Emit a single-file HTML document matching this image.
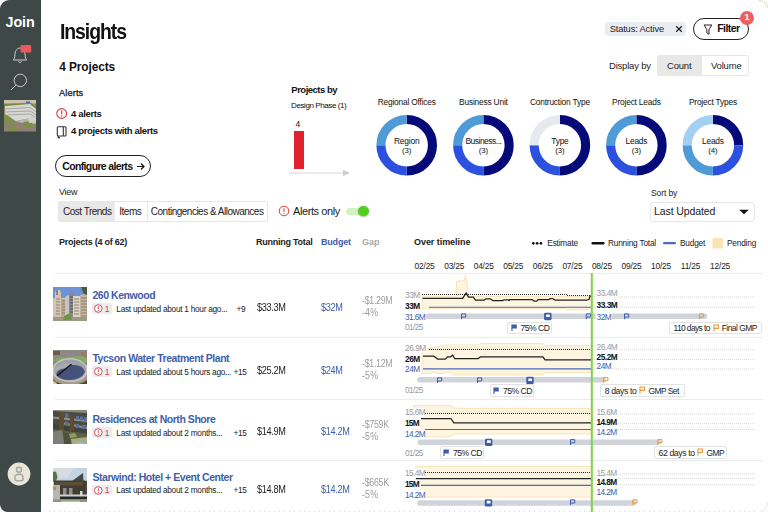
<!DOCTYPE html>
<html lang="en">
<head>
<meta charset="utf-8">
<title>Insights</title>
<style>
*{box-sizing:border-box;margin:0;padding:0}
html,body{width:768px;height:512px;overflow:hidden;background:#fff}
body{font-family:"Liberation Sans",sans-serif;color:#111;position:relative;font-size:10px}
.t{position:absolute;white-space:nowrap;line-height:1}
.b{font-weight:bold}
.abs{position:absolute}
#side{position:absolute;left:0;top:0;width:41px;height:512px;background:#3e4847;border-radius:9px 0 0 7.5px}
.blue{color:#3f5ea9}
.gray{color:#8f8f8f}
.sep{position:absolute;left:55px;width:708px;height:0;border-top:1px solid #eaedf0}
.thumb{position:absolute;left:53px;width:34px;height:34px;overflow:hidden}
.badge{position:absolute;left:92.3px;width:20px;height:10.4px;background:#e9edf2;border-radius:2px}
.tag{position:absolute;height:12.4px;border:1px solid #e2e2e2;border-radius:2px;background:#fff}
</style>
</head>
<body>
<!-- SIDEBAR -->
<div id="side"></div>
<div class="t b" style="left:5.5px;top:14.6px;font-size:14.3px;color:#fff;letter-spacing:-0.05px">Join</div>

<!-- HEADER -->
<div class="t b" style="left:60px;top:20.6px;font-size:21.6px;letter-spacing:-1.2px;transform:scaleX(0.9);transform-origin:0 0">Insights</div>
<div class="t b" style="left:59.2px;top:61.5px;font-size:11.9px;letter-spacing:-0.1px">4 Projects</div>
<div class="t" style="left:59px;top:88.8px;font-size:9.3px;letter-spacing:0.1px;-webkit-text-stroke:0.25px #111">Alerts</div>
<div class="t b" style="left:71px;top:109px;font-size:9.5px;letter-spacing:-0.35px">4 alerts</div>
<div class="t b" style="left:71px;top:126px;font-size:9.5px;letter-spacing:-0.35px">4 projects with alerts</div>
<div class="abs" style="left:55px;top:155.200px;width:96px;height:21.500px;border:1.200px solid #222;border-radius:11px"></div>
<div class="t b" style="left:62.3px;top:161px;font-size:10.5px;letter-spacing:-0.65px">Configure alerts</div>
<div class="t" style="left:59px;top:188px;font-size:9px;letter-spacing:-0.3px;color:#222">View</div>

<!-- sidebar icons -->
<svg class="abs" style="left:0;top:40px" width="41" height="100" viewBox="0 0 41 100">
  <!-- bell -->
  <path d="M13.3 20 C15.3 18.3 14.6 14.2 15.4 11.8 C16.3 9 18.5 8 20 8 C21.5 8 23.7 9 24.6 11.8 C25.4 14.2 24.7 18.3 26.7 20 Z" fill="none" stroke="#c9cccb" stroke-width="1"/>
  <path d="M18.3 21.6 Q20 23.4 21.7 21.6" fill="none" stroke="#c9cccb" stroke-width="1"/>
  <rect x="20.5" y="5" width="10.7" height="7.5" rx="1" fill="#e9595c"/>
  <!-- search -->
  <circle cx="20.3" cy="40.4" r="6.2" fill="none" stroke="#c9cccb" stroke-width="1"/>
  <path d="M16 45 L11 50" stroke="#c9cccb" stroke-width="1"/>
</svg>
<!-- sidebar project thumbnail -->
<svg class="abs" style="left:4px;top:100px" width="32" height="31.5" viewBox="0 0 32 31.5"><defs><filter id="bl0" x="0" y="0" width="100%" height="100%"><feGaussianBlur stdDeviation="0.5"/></filter><clipPath id="c0"><rect width="32" height="31.500"/></clipPath></defs>
<g clip-path="url(#c0)"><g filter="url(#bl0)">
<rect x="-2" y="-2" width="36" height="36" fill="#8f8c78"/>
<rect x="-2" y="-2" width="36" height="5.500" fill="#cbc3ac"/>
<rect x="22" y="1.500" width="4" height="1.500" fill="#3f66c8"/>
<path d="M-1 4 L27 3 L33 8 L33 12 L-1 9Z" fill="#76883f"/>
<path d="M1 6 L26 4 L32 9 L32 17 L12 21 L1 15Z" fill="#d6d6d2"/>
<path d="M1 9 L26 7.500 L32 12 M1 12 L26 11 L32 15 M3 15 L26 14 L31 17" stroke="#a9a8a0" stroke-width="1" fill="none"/>
<path d="M-1 13 L6 17 L12 22 L9 27 L-1 26Z" fill="#7e8f48"/>
<path d="M12 21 L32 17 L33 24 L20 24Z" fill="#b9b6ae"/>
<path d="M-1 25 L12 22 L33 25 L33 34 L-1 34Z" fill="#8e8074"/>
<path d="M4 27 L12 25 L14 32 L5 33Z M19 22 L27 21 L30 27 L22 28Z" fill="#7d8e48"/>
<path d="M24 18 L33 17 L33 22 L25 23Z" fill="#d0d0cc"/>
</g></g></svg>
<!-- avatar -->
<svg class="abs" style="left:5.2px;top:460.200px" width="28" height="28" viewBox="0 0 28 28">
  <circle cx="14" cy="14" r="11.4" fill="#e9e5d8"/>
  <circle cx="14" cy="9.800" r="2.500" fill="none" stroke="#a6a6a0" stroke-width="1.400"/>
  <path d="M10 20 L10 17.200 Q10 14.200 14 14.200 Q18 14.200 18 17.200 L18 20 Q14 21.800 10 20 Z" fill="none" stroke="#a6a6a0" stroke-width="1.400"/>
</svg>

<!-- alert icons -->
<svg class="abs" style="left:55px;top:106px" width="14" height="34" viewBox="0 0 14 34">
  <circle cx="6.700" cy="7.500" r="4.900" fill="#fff" stroke="#e0383e" stroke-width="1.100"/>
  <rect x="6.100" y="4.500" width="1.200" height="3.800" fill="#e0383e"/><rect x="6.100" y="9.200" width="1.200" height="1.300" fill="#e0383e"/>
  <!-- book/projects icon -->
  <path d="M3.300 20.800 H10 Q11 20.800 11 21.800 V29 Q11 30 10 30 H3.300 Q2.300 30 2.300 29 V21.800 Q2.300 20.800 3.300 20.800 Z M8.300 20.800 V30 M3.200 30 V31.600 H5" fill="none" stroke="#333" stroke-width="1.100"/>
</svg>
<!-- arrow in configure alerts button -->
<svg class="abs" style="left:135.5px;top:161.8px" width="11" height="9" viewBox="0 0 11 9"><path d="M1 4.5 H8 M5 1.500 L8 4.5 L5 7.500" fill="none" stroke="#111" stroke-width="1.2"/></svg>

<!-- view tabs -->
<div class="abs" style="left:58px;top:200.5px;width:210px;height:21px;border:1px solid #e6e6e6;border-radius:3px;background:#fff"></div>
<div class="abs" style="left:58px;top:200.5px;width:57px;height:21px;background:#e8e8e8;border-radius:3px 0 0 3px"></div>
<div class="abs" style="left:146.5px;top:200.5px;width:1px;height:21px;background:#e6e6e6"></div>
<div class="t" style="left:63px;top:206.5px;font-size:10px;letter-spacing:-0.5px;color:#222">Cost Trends</div>
<div class="t" style="left:119.3px;top:206.5px;font-size:10px;letter-spacing:-0.5px;color:#222">Items</div>
<div class="t" style="left:150.8px;top:206.5px;font-size:10px;letter-spacing:-0.5px;color:#222">Contingencies &amp; Allowances</div>

<!-- alerts only -->
<svg class="abs" style="left:277px;top:204px" width="14" height="14" viewBox="0 0 14 14">
  <circle cx="7" cy="7" r="4.8" fill="#fff" stroke="#e0383e" stroke-width="1"/>
  <rect x="6.5" y="4.2" width="1" height="3.6" fill="#e0383e"/><rect x="6.5" y="8.8" width="1" height="1.1" fill="#e0383e"/>
</svg>
<div class="t" style="left:293px;top:205.5px;font-size:11px;letter-spacing:-0.4px;color:#222">Alerts only</div>
<div class="abs" style="left:346px;top:207.7px;width:21px;height:7px;border-radius:3.5px;background:#d2f3c0"></div>
<div class="abs" style="left:358.4px;top:206px;width:10.2px;height:10.2px;border-radius:50%;background:#4fd01c;box-shadow:0 1px 1.5px rgba(0,0,0,.3)"></div>

<!-- Projects by bar chart -->
<div class="t b" style="left:291.3px;top:84.7px;font-size:9.5px;letter-spacing:-0.5px">Projects by</div>
<div class="t" style="left:291px;top:101.8px;font-size:8.1px;letter-spacing:-0.45px">Design Phase (1)</div>
<div class="t" style="left:295.5px;top:120px;font-size:8.5px">4</div>
<div class="abs" style="left:293.5px;top:131.2px;width:10.3px;height:38.3px;background:#e0212e"></div>
<svg class="abs" style="left:288px;top:168px" width="64" height="10" viewBox="0 0 64 10"><path d="M1 5 H56" stroke="#d8d8d8" stroke-width="1"/><path d="M55 1.800 L62 5 L55 8.200 Z" fill="#cdd0d3"/></svg>

<!-- donuts -->
<svg class="abs" style="left:0;top:0" width="768" height="240" viewBox="0 0 768 240" font-family="Liberation Sans, sans-serif">
<path d="M406.70 119.55 A25.75 25.75 0 0 1 406.70 171.05" fill="none" stroke="#050a78" stroke-width="9.1"/>
<path d="M406.70 171.05 A25.75 25.75 0 0 1 380.95 145.30" fill="none" stroke="#2c50e0" stroke-width="9.1"/>
<path d="M380.95 145.30 A25.75 25.75 0 0 1 406.70 119.55" fill="none" stroke="#4f9bd8" stroke-width="9.1"/>
<text x="406.7" y="104.6" font-size="8.4" text-anchor="middle" fill="#111" letter-spacing="-0.2">Regional Offices</text>
<text x="406.7" y="144" font-size="8.4" text-anchor="middle" fill="#111" letter-spacing="-0.2">Region</text>
<text x="406.7" y="152.8" font-size="7.8" text-anchor="middle" fill="#111">(3)</text>
<path d="M483.40 119.55 A25.75 25.75 0 0 1 483.40 171.05" fill="none" stroke="#050a78" stroke-width="9.1"/>
<path d="M483.40 171.05 A25.75 25.75 0 0 1 457.65 145.30" fill="none" stroke="#2c50e0" stroke-width="9.1"/>
<path d="M457.65 145.30 A25.75 25.75 0 0 1 483.40 119.55" fill="none" stroke="#4f9bd8" stroke-width="9.1"/>
<text x="483.4" y="104.6" font-size="8.4" text-anchor="middle" fill="#111" letter-spacing="-0.2">Business Unit</text>
<text x="483.4" y="144" font-size="8.4" text-anchor="middle" fill="#111" letter-spacing="-0.45">Business...</text>
<text x="483.4" y="152.8" font-size="7.8" text-anchor="middle" fill="#111">(3)</text>
<path d="M559.90 119.55 A25.75 25.75 0 0 1 559.90 171.05" fill="none" stroke="#050a78" stroke-width="9.1"/>
<path d="M559.90 171.05 A25.75 25.75 0 0 1 534.15 145.30" fill="none" stroke="#2c50e0" stroke-width="9.1"/>
<path d="M534.15 145.30 A25.75 25.75 0 0 1 559.90 119.55" fill="none" stroke="#e6e9ee" stroke-width="9.1"/>
<text x="559.9" y="104.6" font-size="8.4" text-anchor="middle" fill="#111" letter-spacing="-0.2">Contruction Type</text>
<text x="559.9" y="144" font-size="8.4" text-anchor="middle" fill="#111" letter-spacing="-0.2">Type</text>
<text x="559.9" y="152.8" font-size="7.8" text-anchor="middle" fill="#111">(3)</text>
<path d="M636.40 119.55 A25.75 25.75 0 0 1 636.40 171.05" fill="none" stroke="#050a78" stroke-width="9.1"/>
<path d="M636.40 171.05 A25.75 25.75 0 0 1 610.65 145.30" fill="none" stroke="#2c50e0" stroke-width="9.1"/>
<path d="M610.65 145.30 A25.75 25.75 0 0 1 636.40 119.55" fill="none" stroke="#4f9bd8" stroke-width="9.1"/>
<text x="636.4" y="104.6" font-size="8.4" text-anchor="middle" fill="#111" letter-spacing="-0.2">Project Leads</text>
<text x="636.4" y="144" font-size="8.4" text-anchor="middle" fill="#111" letter-spacing="-0.2">Leads</text>
<text x="636.4" y="152.8" font-size="7.8" text-anchor="middle" fill="#111">(3)</text>
<path d="M712.90 119.55 A25.75 25.75 0 0 1 738.65 145.30" fill="none" stroke="#050a78" stroke-width="9.1"/>
<path d="M738.65 145.30 A25.75 25.75 0 0 1 712.90 171.05" fill="none" stroke="#2c50e0" stroke-width="9.1"/>
<path d="M712.90 171.05 A25.75 25.75 0 0 1 687.15 145.30" fill="none" stroke="#4f9bd8" stroke-width="9.1"/>
<path d="M687.15 145.30 A25.75 25.75 0 0 1 712.90 119.55" fill="none" stroke="#a3d0f2" stroke-width="9.1"/>
<text x="712.9" y="104.6" font-size="8.4" text-anchor="middle" fill="#111" letter-spacing="-0.2">Project Types</text>
<text x="712.9" y="144" font-size="8.4" text-anchor="middle" fill="#111" letter-spacing="-0.2">Leads</text>
<text x="712.9" y="152.8" font-size="7.8" text-anchor="middle" fill="#111">(4)</text>
</svg>
<!-- top right -->
<div class="abs" style="left:605px;top:22px;width:81px;height:14px;background:#e9edf1;border-radius:3px"></div>
<div class="t" style="left:609.7px;top:25.2px;font-size:9.3px;letter-spacing:-0.15px;color:#222">Status: Active</div>
<svg class="abs" style="left:675px;top:25px" width="8" height="8" viewBox="0 0 8 8"><path d="M1.2 1.2 L6.8 6.8 M6.8 1.2 L1.2 6.8" stroke="#222" stroke-width="1.25"/></svg>
<div class="abs" style="left:693.3px;top:18px;width:56.2px;height:21.5px;border:1px solid #222;border-radius:11px;background:#fff"></div>
<svg class="abs" style="left:703.3px;top:23.5px" width="11" height="12" viewBox="0 0 11 12"><path d="M1 1 H8.8 L6 5.6 V10.3 L3.9 8.9 V5.6 Z" fill="none" stroke="#222" stroke-width="1" stroke-linejoin="round"/></svg>
<div class="t b" style="left:717.3px;top:23px;font-size:10.5px;letter-spacing:-0.6px">Filter</div>
<div class="abs" style="left:740.1px;top:10.6px;width:14px;height:14px;border-radius:50%;background:#ea6160"></div>
<div class="t b" style="left:744.6px;top:13.2px;font-size:9px;color:#fff">1</div>

<div class="t" style="left:609px;top:61px;font-size:9.5px;letter-spacing:-0.2px;color:#222">Display by</div>
<div class="abs" style="left:657px;top:55px;width:92px;height:21px;border:1px solid #e6e6e6;border-radius:3px;background:#fff"></div>
<div class="abs" style="left:657px;top:55px;width:45px;height:21px;background:#e8e8e8;border-radius:3px 0 0 3px"></div>
<div class="t" style="left:667px;top:61px;font-size:9.5px;letter-spacing:-0.2px;color:#222">Count</div>
<div class="t" style="left:711px;top:61px;font-size:9.5px;letter-spacing:-0.2px;color:#222">Volume</div>

<div class="t" style="left:651px;top:189.3px;font-size:8.5px;letter-spacing:-0.1px;color:#222">Sort by</div>
<div class="abs" style="left:650px;top:201.5px;width:105px;height:20.5px;border:1px solid #e6e6e6;border-radius:3px;background:#fff"></div>
<div class="t" style="left:654px;top:206px;font-size:10.5px;letter-spacing:-0.1px;color:#222">Last Updated</div>
<svg class="abs" style="left:738.5px;top:209px" width="10" height="6" viewBox="0 0 10 6"><path d="M0.2 0.8 H9.800 L5 5.300 Z" fill="#111"/></svg>

<!-- table header -->
<div class="t b" style="left:59px;top:238px;font-size:9px;letter-spacing:-0.25px;color:#222">Projects (4 of 62)</div>
<div class="t b" style="left:256px;top:238px;font-size:9px;letter-spacing:-0.25px;color:#222">Running Total</div>
<div class="t b blue" style="left:321px;top:238px;font-size:9px;letter-spacing:-0.2px">Budget</div>
<div class="t b" style="left:362px;top:238px;font-size:9px;color:#a8a8a8">Gap</div>
<div class="t b" style="left:414px;top:238px;font-size:9px;letter-spacing:-0.05px;color:#222">Over timeline</div>
<!-- legend -->
<svg class="abs" style="left:530px;top:236px" width="230" height="14" viewBox="0 0 230 14">
  <circle cx="3.3" cy="7.3" r="1.35" fill="#111"/><circle cx="7.1" cy="7.3" r="1.35" fill="#111"/><circle cx="10.9" cy="7.3" r="1.35" fill="#111"/>
  <rect x="61.5" y="6" width="13" height="2.4" rx="1.2" fill="#111"/>
  <rect x="133" y="6.1" width="13" height="2.2" rx="1.1" fill="#4a6cc0"/>
  <rect x="182.5" y="2" width="10.5" height="10.5" rx="1" fill="#fbe4b4"/>
</svg>
<div class="t" style="left:547.3px;top:239px;font-size:8.3px;letter-spacing:-0.2px;color:#222">Estimate</div>
<div class="t" style="left:608px;top:239px;font-size:8.3px;letter-spacing:-0.2px;color:#222">Running Total</div>
<div class="t" style="left:680px;top:239px;font-size:8.3px;letter-spacing:-0.2px;color:#222">Budget</div>
<div class="t" style="left:727px;top:239px;font-size:8.3px;letter-spacing:-0.2px;color:#222">Pending</div>

<!-- rows -->
<div class="sep" style="top:273.0px"></div>
<div class="sep" style="top:337.0px"></div>
<div class="sep" style="top:399.0px"></div>
<div class="sep" style="top:460.0px"></div>
<svg class="abs" style="left:0;top:0" width="768" height="512" viewBox="0 0 768 512"><path d="M44 511.500 H756" stroke="#d9d9d9" stroke-width="1" stroke-dasharray="1 4"/><path d="M759.500 0.500 A8.500 8.500 0 0 1 767.500 8.500" fill="none" stroke="#b08088" stroke-width="0.8" stroke-dasharray="1 1.500"/><path d="M767.500 503.500 A8.500 8.500 0 0 1 759.500 511.500" fill="none" stroke="#e0a0a8" stroke-width="0.8" stroke-dasharray="1 1.500"/></svg>
<svg class="abs" style="left:53px;top:286.5px" width="34" height="34" viewBox="0 0 34 34"><defs><filter id="bl1" x="0" y="0" width="100%" height="100%"><feGaussianBlur stdDeviation="0.45"/></filter><clipPath id="c1"><rect width="34" height="34"/></clipPath></defs>
<g clip-path="url(#c1)"><g filter="url(#bl1)">
<rect x="-2" y="-2" width="38" height="38" fill="#cfc3b2"/>
<rect x="-2" y="-2" width="38" height="13" fill="#6c93d8"/>
<path d="M28 -1 L36 -1 L36 9 L31 7 L29 3Z" fill="#4b5c3c"/>
<path d="M2 34 V6 L3 3 H7 L8 6 V34Z" fill="#d3c6b2"/><path d="M3 8 V3 H5 V8Z" fill="#8f8577"/>
<path d="M8 34 V12 H13 V34Z" fill="#b9a995"/>
<path d="M12 34 V10 L15 8 L17 10 V34Z" fill="#c9c3bb"/>
<path d="M16 34 V7 L18 5 H20 L21 7 V34Z" fill="#8a8a8e"/>
<path d="M20 34 V9 H27 V34Z" fill="#ded3c2"/>
<path d="M27 34 V8 L31 7 L36 9 V34Z" fill="#c4b39e"/>
<path d="M3 12h4M3 15h4M3 18h4M3 21h4M3 24h4M3 27h4M9 14h3M9 17h3M9 20h3M9 23h3M9 26h3" stroke="#8d7b69" stroke-width="0.9"/>
<path d="M17 10h3M17 13h3M17 16h3M17 19h3M17 22h3M17 25h3" stroke="#4f5560" stroke-width="1.1"/>
<path d="M21 12h5M21 15h5M21 18h5M21 21h5M21 24h5M21 27h5M28 11h6M28 14h6M28 17h6M28 20h6M28 23h6M28 26h6M28 29h6" stroke="#8b7866" stroke-width="0.9"/>
<rect x="-2" y="30" width="38" height="6" fill="#9c9a82"/><path d="M11 29 L17 26 L19 33 L10 33Z" fill="#6f9446"/>
</g></g></svg>
<div class="t b blue" style="left:92.4px;top:290.4px;font-size:10.5px;letter-spacing:-0.45px">260 Kenwood</div>
<div class="badge" style="top:303.3px"></div>
<svg class="abs" style="left:92.5px;top:303.0px" width="11" height="11" viewBox="0 0 11 11"><circle cx="5.3" cy="5.5" r="3.8" fill="#fff" stroke="#e0383e" stroke-width="0.9"/><rect x="4.85" y="3.2" width="0.9" height="3" fill="#e0383e"/><rect x="4.85" y="7" width="0.9" height="0.9" fill="#e0383e"/></svg>
<div class="t" style="left:104.8px;top:304.5px;font-size:8.5px;color:#e0383e">1</div>
<div class="t" style="left:116.3px;top:304.5px;font-size:8.3px;letter-spacing:-0.28px;color:#222">Last updated about 1 hour ago...</div>
<div class="t" style="left:236.5px;top:304.5px;font-size:8.3px;letter-spacing:-0.3px;color:#222">+9</div>
<div class="t" style="left:256.8px;top:303.1px;font-size:10.2px;letter-spacing:-0.35px;color:#222;transform:scaleX(0.9);transform-origin:0 0">$33.3M</div>
<div class="t blue" style="left:321px;top:303.1px;font-size:10.2px;letter-spacing:-0.35px;transform:scaleX(0.9);transform-origin:0 0">$32M</div>
<div class="t" style="left:362px;top:296.1px;font-size:10px;letter-spacing:-0.3px;color:#9c9c9c;transform:scaleX(0.88);transform-origin:0 0">-$1.29M</div>
<div class="t" style="left:362px;top:308.0px;font-size:10px;letter-spacing:0.2px;color:#9c9c9c;transform:scaleX(0.88);transform-origin:0 0">-4%</div>
<svg class="abs" style="left:53px;top:349.5px" width="34" height="34" viewBox="0 0 34 34"><defs><filter id="bl2" x="0" y="0" width="100%" height="100%"><feGaussianBlur stdDeviation="0.5"/></filter><clipPath id="c2"><rect width="34" height="34"/></clipPath></defs>
<g clip-path="url(#c2)"><g filter="url(#bl2)">
<rect x="-2" y="-2" width="38" height="38" fill="#8c8c84"/>
<rect x="-2" y="-2" width="38" height="8" fill="#8e8a82"/><rect x="-2" y="1" width="9" height="4" fill="#6a5a50"/><rect x="28" y="2" width="8" height="6" fill="#9a7a70"/>
<path d="M4 8 L30 6 L36 10 L36 13 L0 11Z" fill="#86a862"/>
<ellipse cx="17" cy="20.5" rx="18" ry="12.5" fill="#c3c4c0"/>
<ellipse cx="17" cy="20" rx="16" ry="10.5" fill="#9da3a8"/>
<path d="M3 24 Q6 17 18 15 Q30 14 32 22 Q28 30 16 30 Q6 30 3 24Z" fill="#44537a"/>
<path d="M1 18 Q10 13 20 13 L14 18 Q6 19 1 22Z" fill="#a9acad"/>
<path d="M4.5 25.5 L18 14.5" stroke="#15171a" stroke-width="1.6" stroke-linecap="round"/>
<path d="M-1 25 Q8 33 20 32 Q30 31 35 25 L35 29 Q28 35 17 35 Q6 35 -1 29Z" fill="#a89a86"/>
<path d="M-1 29 Q8 36 20 35 Q30 34 35 29 L35 36 L-1 36Z" fill="#4c4c42"/>
<path d="M-1 30 L4 33 L2 36 L-1 36Z" fill="#d8cda8"/>
</g></g></svg>
<div class="t b blue" style="left:92.4px;top:353.4px;font-size:10.5px;letter-spacing:-0.45px">Tycson Water Treatment Plant</div>
<div class="badge" style="top:366.3px"></div>
<svg class="abs" style="left:92.5px;top:366.0px" width="11" height="11" viewBox="0 0 11 11"><circle cx="5.3" cy="5.5" r="3.8" fill="#fff" stroke="#e0383e" stroke-width="0.9"/><rect x="4.85" y="3.2" width="0.9" height="3" fill="#e0383e"/><rect x="4.85" y="7" width="0.9" height="0.9" fill="#e0383e"/></svg>
<div class="t" style="left:104.8px;top:367.5px;font-size:8.5px;color:#e0383e">1</div>
<div class="t" style="left:116.3px;top:367.5px;font-size:8.3px;letter-spacing:-0.28px;color:#222">Last updated about 5 hours ago...</div>
<div class="t" style="left:233.5px;top:367.5px;font-size:8.3px;letter-spacing:-0.3px;color:#222">+15</div>
<div class="t" style="left:256.8px;top:366.1px;font-size:10.2px;letter-spacing:-0.35px;color:#222;transform:scaleX(0.9);transform-origin:0 0">$25.2M</div>
<div class="t blue" style="left:321px;top:366.1px;font-size:10.2px;letter-spacing:-0.35px;transform:scaleX(0.9);transform-origin:0 0">$24M</div>
<div class="t" style="left:362px;top:359.1px;font-size:10px;letter-spacing:-0.3px;color:#9c9c9c;transform:scaleX(0.88);transform-origin:0 0">-$1.12M</div>
<div class="t" style="left:362px;top:371.0px;font-size:10px;letter-spacing:0.2px;color:#9c9c9c;transform:scaleX(0.88);transform-origin:0 0">-5%</div>
<svg class="abs" style="left:53px;top:410px" width="34" height="34" viewBox="0 0 34 34"><defs><filter id="bl3" x="0" y="0" width="100%" height="100%"><feGaussianBlur stdDeviation="0.45"/></filter><clipPath id="c3"><rect width="34" height="34"/></clipPath></defs>
<g clip-path="url(#c3)"><g filter="url(#bl3)">
<rect x="-2" y="-2" width="38" height="38" fill="#545246"/>
<path d="M-1 -1 L35 -1 L35 3 L-1 1Z" fill="#8d8a7c"/>
<path d="M-1 1 L35 4 L35 9 L-1 6Z" fill="#4a4a44"/>
<path d="M-1 6.5 L35 10 L35 12 L-1 8.5Z" fill="#96927f"/>
<path d="M-1 9 L35 12.5 L35 18 L-1 14Z" fill="#4c4c46"/>
<path d="M8 12 L35 17 L35 19 L8 14Z" fill="#928e7c"/>
<path d="M-1 14 L35 19.5 L35 24 L-1 20Z" fill="#43433c"/>
<path d="M6 2 h5 v18 h-5z M17 5 h4 v6 h-4z M17 11 h4 v10 h-4z" fill="#5d4b30"/>
<path d="M12 3.5 h3.5 v4 h-3.5z M23 6 h3 v4 h-3z M27 6.5 h3 v4 h-3z M31 7 h3 v4 h-3z M12 11.5 h3.500 v4 h-3.5z M23 14 h3 v4 h-3z M29 15 h4 v4 h-4z" fill="#5a7298"/>
<path d="M-1 19 L35 24 L35 36 L-1 36Z" fill="#5e6244"/>
<path d="M-1 22 L9 20 L12 36 L-1 36Z" fill="#7f7f7a"/>
<path d="M16 24 L22 23 L24 27 L17 28Z" fill="#8ea05a"/>
<path d="M18 29 L34 27 L35 36 L19 36Z" fill="#a8aa88"/>
<path d="M22 33 L30 32 L31 36 L22 36Z" fill="#9cb8d8"/>
<path d="M10 22 L16 24 L18 34 L11 34Z" fill="#4c5238"/>
</g></g></svg>
<div class="t b blue" style="left:92.4px;top:414.4px;font-size:10.5px;letter-spacing:-0.45px">Residences at North Shore</div>
<div class="badge" style="top:427.3px"></div>
<svg class="abs" style="left:92.5px;top:427.0px" width="11" height="11" viewBox="0 0 11 11"><circle cx="5.3" cy="5.5" r="3.8" fill="#fff" stroke="#e0383e" stroke-width="0.9"/><rect x="4.85" y="3.2" width="0.9" height="3" fill="#e0383e"/><rect x="4.85" y="7" width="0.9" height="0.9" fill="#e0383e"/></svg>
<div class="t" style="left:104.8px;top:428.5px;font-size:8.5px;color:#e0383e">1</div>
<div class="t" style="left:116.3px;top:428.5px;font-size:8.3px;letter-spacing:-0.28px;color:#222">Last updated about 2 months...</div>
<div class="t" style="left:233.5px;top:428.5px;font-size:8.3px;letter-spacing:-0.3px;color:#222">+15</div>
<div class="t" style="left:256.8px;top:427.1px;font-size:10.2px;letter-spacing:-0.35px;color:#222;transform:scaleX(0.9);transform-origin:0 0">$14.9M</div>
<div class="t blue" style="left:321px;top:427.1px;font-size:10.2px;letter-spacing:-0.35px;transform:scaleX(0.9);transform-origin:0 0">$14.2M</div>
<div class="t" style="left:362px;top:420.1px;font-size:10px;letter-spacing:-0.3px;color:#9c9c9c;transform:scaleX(0.88);transform-origin:0 0">-$759K</div>
<div class="t" style="left:362px;top:432.0px;font-size:10px;letter-spacing:0.2px;color:#9c9c9c;transform:scaleX(0.88);transform-origin:0 0">-5%</div>
<svg class="abs" style="left:53px;top:467.5px" width="34" height="34" viewBox="0 0 34 34"><defs><filter id="bl4" x="0" y="0" width="100%" height="100%"><feGaussianBlur stdDeviation="0.45"/></filter><clipPath id="c4"><rect width="34" height="34"/></clipPath></defs>
<g clip-path="url(#c4)"><g filter="url(#bl4)">
<rect x="-2" y="-2" width="38" height="38" fill="#c4d2e2"/>
<path d="M-2 -2 H22 L14 10 H-2Z" fill="#d6dce2"/>
<path d="M-1 4 L3 3.5 L4.500 9 L3 13 L-1 14Z" fill="#5a7244"/>
<path d="M19 13 L30 5 L30.5 13 L36 12.500 L36 28 L19 28Z" fill="#444a48"/>
<path d="M1 12.500 H32 V28 H1Z" fill="#423e32"/>
<path d="M2 14 H30 V17.500 H2Z" fill="#5c5038"/>
<path d="M-1 17 H7 V35 H-1Z" fill="#b4b6b0"/>
<path d="M0 19 h3 v3 h-3z" fill="#d8843c"/>
<path d="M10 20 h3.500 v7 h-3.500z M16 20 h3.500 v7 h-3.500z" fill="#8e908a"/>
<path d="M7 26.500 H36 V28.500 H7Z" fill="#cfcfca"/>
<path d="M27 23 h2.500 v6 h-2.500z" fill="#d8d8d4"/>
<path d="M7 28.500 H36 V31.500 H7Z" fill="#2a2a28"/>
<path d="M-1 31.500 H36 V36 H-1Z" fill="#8a9480"/>
<path d="M8 32.500 H27 V34 H8Z" fill="#a8c890"/>
</g></g></svg>
<div class="t b blue" style="left:92.4px;top:471.9px;font-size:10.5px;letter-spacing:-0.45px">Starwind: Hotel + Event Center</div>
<div class="badge" style="top:484.8px"></div>
<svg class="abs" style="left:92.5px;top:484.5px" width="11" height="11" viewBox="0 0 11 11"><circle cx="5.3" cy="5.5" r="3.8" fill="#fff" stroke="#e0383e" stroke-width="0.9"/><rect x="4.85" y="3.2" width="0.9" height="3" fill="#e0383e"/><rect x="4.85" y="7" width="0.9" height="0.9" fill="#e0383e"/></svg>
<div class="t" style="left:104.8px;top:486px;font-size:8.5px;color:#e0383e">1</div>
<div class="t" style="left:116.3px;top:486px;font-size:8.3px;letter-spacing:-0.28px;color:#222">Last updated about 2 months...</div>
<div class="t" style="left:233.5px;top:486px;font-size:8.3px;letter-spacing:-0.3px;color:#222">+15</div>
<div class="t" style="left:256.8px;top:484.6px;font-size:10.2px;letter-spacing:-0.35px;color:#222;transform:scaleX(0.9);transform-origin:0 0">$14.8M</div>
<div class="t blue" style="left:321px;top:484.6px;font-size:10.2px;letter-spacing:-0.35px;transform:scaleX(0.9);transform-origin:0 0">$14.2M</div>
<div class="t" style="left:362px;top:477.6px;font-size:10px;letter-spacing:-0.3px;color:#9c9c9c;transform:scaleX(0.88);transform-origin:0 0">-$665K</div>
<div class="t" style="left:362px;top:489.5px;font-size:10px;letter-spacing:0.2px;color:#9c9c9c;transform:scaleX(0.88);transform-origin:0 0">-5%</div>
<!-- timeline -->
<svg class="abs" style="left:0;top:250px" width="768" height="262" viewBox="0 250 768 262" font-family="Liberation Sans, sans-serif">
<text x="424.6" y="268.8" font-size="8.4" text-anchor="middle" fill="#222" letter-spacing="-0.2">02/25</text>
<text x="454.2" y="268.8" font-size="8.4" text-anchor="middle" fill="#222" letter-spacing="-0.2">03/25</text>
<text x="483.7" y="268.8" font-size="8.4" text-anchor="middle" fill="#222" letter-spacing="-0.2">04/25</text>
<text x="513.2" y="268.8" font-size="8.4" text-anchor="middle" fill="#222" letter-spacing="-0.2">05/25</text>
<text x="542.8" y="268.8" font-size="8.4" text-anchor="middle" fill="#222" letter-spacing="-0.2">06/25</text>
<text x="572.4" y="268.8" font-size="8.4" text-anchor="middle" fill="#222" letter-spacing="-0.2">07/25</text>
<text x="601.9" y="268.8" font-size="8.4" text-anchor="middle" fill="#222" letter-spacing="-0.2">08/25</text>
<text x="631.5" y="268.8" font-size="8.4" text-anchor="middle" fill="#222" letter-spacing="-0.2">09/25</text>
<text x="661.0" y="268.8" font-size="8.4" text-anchor="middle" fill="#222" letter-spacing="-0.2">10/25</text>
<text x="690.5" y="268.8" font-size="8.4" text-anchor="middle" fill="#222" letter-spacing="-0.2">11/25</text>
<text x="720.1" y="268.8" font-size="8.4" text-anchor="middle" fill="#222" letter-spacing="-0.2">12/25</text>
<!-- row1 -->
<path d="M594 297 H755" stroke="#d9d9d9" stroke-width="1" stroke-dasharray="1 1"/>
<path d="M594 307.2 H755" stroke="#d9d9d9" stroke-width="1" stroke-dasharray="1 1"/>
<path d="M422 296.3 H456.5 V281 L464.3 280.8 L465.3 275.3 L466.5 281 L468.5 296.3 H592 V308.6 H589.500 L588.500 309.800 H566 L565 308.600 H422Z" fill="#fef5e1" stroke="#f8deaa" stroke-width="0.8"/>
<path d="M422 294.5 H567" fill="none" stroke="#2a2a2a" stroke-width="1.1" stroke-dasharray="1 1" shape-rendering="crispEdges"/>
<path d="M567 295.5 H592" fill="none" stroke="#2a2a2a" stroke-width="1.1" stroke-dasharray="1 1" shape-rendering="crispEdges"/>
<path d="M422.5 298.4 H462.7 L466.2 292.8 L468.4 297.1 H473.4 L475.5 300.2 H484 L486 298.8 H490.2 L492.7 300.5 H503 L504 299.8 H508 L509 300.5 L510 299.5 H532 L534 301 H537 L538 299.5 H549 L550 298.7 H553 L555 300 H587 L589 299.5 L590 296.2 H592" fill="none" stroke="#222" stroke-width="1.25" stroke-linejoin="round"/>
<path d="M429 307.2 H592" stroke="#4a68b8" stroke-width="1.15"/>
<rect x="425.5" y="313.5" width="281.8" height="5.5" rx="2.75" fill="#d0d3d9"/>
<path d="M461.5 319.2 V313.9 H465.7 V317.09999999999997 H461.5" fill="none" stroke="#3f5ea9" stroke-width="1"/><rect x="544.0999999999999" y="312.8" width="7.4" height="7.4" rx="1.3" fill="#3f5ea9"/><path d="M546.0999999999999 318.8 V314.40000000000003 H549.8 V317.1 H546.0999999999999Z" fill="#fff"/><path d="M586.3 319.2 V313.9 H590.5 V317.09999999999997 H586.3" fill="none" stroke="#3f5ea9" stroke-width="1"/><path d="M624.5 319.2 V313.9 H628.7 V317.09999999999997 H624.5" fill="none" stroke="#3f5ea9" stroke-width="1"/><path d="M699.5 319.2 V313.9 H703.7 V317.09999999999997 H699.5" fill="none" stroke="#e39a3c" stroke-width="1"/>
<rect x="404.0" y="290.8" width="16.4" height="9" fill="#fff"/><text x="405.0" y="298" font-size="8.3" font-weight="normal" fill="#9a9a9a" letter-spacing="-0.45">33M</text>
<rect x="404.0" y="301.8" width="17.6" height="9" fill="#fff"/><text x="405.0" y="309" font-size="8.3" font-weight="bold" fill="#111" letter-spacing="-0.45">33M</text>
<rect x="404.0" y="312.6" width="21.0" height="9" fill="#fff"/><text x="405.0" y="319.8" font-size="8.3" font-weight="normal" fill="#3f5ea9" letter-spacing="-0.60">31.6M</text>
<rect x="404.0" y="323.1" width="18.7" height="9" fill="#fff"/><text x="405.0" y="330.3" font-size="8.3" font-weight="normal" fill="#9a9a9a" letter-spacing="-0.60">01/25</text>
<rect x="595.5" y="288.8" width="22.4" height="9" fill="#fff"/><text x="596.5" y="296" font-size="8.3" font-weight="normal" fill="#9a9a9a" letter-spacing="-0.45">33.4M</text>
<rect x="595.5" y="300.8" width="23.6" height="9" fill="#fff"/><text x="596.5" y="308" font-size="8.3" font-weight="bold" fill="#111" letter-spacing="-0.45">33.3M</text>
<rect x="595.5" y="312.6" width="16.4" height="9" fill="#fff"/><text x="596.5" y="319.8" font-size="8.3" font-weight="normal" fill="#3f5ea9" letter-spacing="-0.45">32M</text>
<!-- row2 -->
<path d="M594 349.8 H755" stroke="#d9d9d9" stroke-width="1" stroke-dasharray="1 1"/>
<path d="M594 359.3 H755" stroke="#d9d9d9" stroke-width="1" stroke-dasharray="1 1"/>
<path d="M594 369 H755" stroke="#d9d9d9" stroke-width="1" stroke-dasharray="1 1"/>
<path d="M422 349.5 L429 348.5 L436.7 346.6 L447 345 H478 L481 343.5 H543 L545 345.5 H592 V372.5 H545 L543 374.8 H453.5 L452.5 372.3 H447 L445 373.5 H436.7 L435 372.3 H432 L431 373.5 H422Z" fill="#fef5e1" stroke="#f8deaa" stroke-width="0.8"/>
<path d="M429 349.5 H592" fill="none" stroke="#2a2a2a" stroke-width="1.1" stroke-dasharray="1 1" shape-rendering="crispEdges"/>
<path d="M423 356 H433.6 L437.5 359.1 H445.3 L447.7 356.8 H450.8 L452.7 355 L454.7 358.7 H478 L480.5 356.8 H543 L545 359.8 H592" fill="none" stroke="#222" stroke-width="1.25" stroke-linejoin="round"/>
<path d="M423 368.9 H592" stroke="#4a68b8" stroke-width="1.15"/>
<rect x="417.2" y="377.1" width="188.3" height="5.5" rx="2.75" fill="#d0d3d9"/>
<path d="M437.5 383.1 V377.8 H441.7 V381.0 H437.5" fill="none" stroke="#3f5ea9" stroke-width="1"/><path d="M477.5 383.1 V377.8 H481.7 V381.0 H477.5" fill="none" stroke="#3f5ea9" stroke-width="1"/><rect x="526.3" y="376.8" width="7.4" height="7.4" rx="1.3" fill="#3f5ea9"/><path d="M528.3 382.8 V378.40000000000003 H532 V381.1 H528.3Z" fill="#fff"/><path d="M603.7 382.90000000000003 V377.6 H607.9000000000001 V380.8 H603.7" fill="none" stroke="#e39a3c" stroke-width="1"/>
<rect x="404.0" y="343.6" width="22.4" height="9" fill="#fff"/><text x="405.0" y="350.8" font-size="8.3" font-weight="normal" fill="#9a9a9a" letter-spacing="-0.45">26.9M</text>
<rect x="404.0" y="354.3" width="17.6" height="9" fill="#fff"/><text x="405.0" y="361.5" font-size="8.3" font-weight="bold" fill="#111" letter-spacing="-0.45">26M</text>
<rect x="404.0" y="365.1" width="16.4" height="9" fill="#fff"/><text x="405.0" y="372.3" font-size="8.3" font-weight="normal" fill="#3f5ea9" letter-spacing="-0.45">24M</text>
<rect x="404.0" y="386.1" width="18.7" height="9" fill="#fff"/><text x="405.0" y="393.3" font-size="8.3" font-weight="normal" fill="#9a9a9a" letter-spacing="-0.60">01/25</text>
<rect x="595.5" y="343.1" width="22.4" height="9" fill="#fff"/><text x="596.5" y="350.3" font-size="8.3" font-weight="normal" fill="#9a9a9a" letter-spacing="-0.45">26.4M</text>
<rect x="595.5" y="353.1" width="23.6" height="9" fill="#fff"/><text x="596.5" y="360.3" font-size="8.3" font-weight="bold" fill="#111" letter-spacing="-0.45">25.2M</text>
<rect x="595.5" y="362.2" width="16.4" height="9" fill="#fff"/><text x="596.5" y="369.4" font-size="8.3" font-weight="normal" fill="#3f5ea9" letter-spacing="-0.45">24M</text>
<!-- row3 -->
<path d="M594 414 H755" stroke="#d9d9d9" stroke-width="1" stroke-dasharray="1 1"/>
<path d="M594 423.3 H755" stroke="#d9d9d9" stroke-width="1" stroke-dasharray="1 1"/>
<path d="M594 429.5 H755" stroke="#d9d9d9" stroke-width="1" stroke-dasharray="1 1"/>
<path d="M413.8 405.3 H450 L455 408.3 H592 V434 H455 L450 437 H413.8Z" fill="#fef5e1" stroke="#f8deaa" stroke-width="0.8"/>
<path d="M425 413.5 H592" fill="none" stroke="#2a2a2a" stroke-width="1.1" stroke-dasharray="1 1" shape-rendering="crispEdges"/>
<path d="M421 418.5 H451 L453.8 422.8 H592" fill="none" stroke="#222" stroke-width="1.25" stroke-linejoin="round"/>
<path d="M425 429.5 H592" stroke="#4a68b8" stroke-width="1.15"/>
<rect x="417.5" y="439.5" width="243.5" height="5.5" rx="2.75" fill="#d0d3d9"/>
<rect x="485.0" y="438.7" width="7.4" height="7.4" rx="1.3" fill="#3f5ea9"/><path d="M487.0 444.7 V440.3 H490.7 V443.0 H487.0Z" fill="#fff"/><path d="M570.5 444.90000000000003 V439.6 H574.7 V442.8 H570.5" fill="none" stroke="#3f5ea9" stroke-width="1"/><path d="M657.8 444.7 V439.4 H662.0 V442.59999999999997 H657.8" fill="none" stroke="#e39a3c" stroke-width="1"/>
<rect x="404.0" y="408.1" width="21.0" height="9" fill="#fff"/><text x="405.0" y="415.3" font-size="8.3" font-weight="normal" fill="#9a9a9a" letter-spacing="-0.60">15.6M</text>
<rect x="404.0" y="419.1" width="16.1" height="9" fill="#fff"/><text x="405.0" y="426.3" font-size="8.3" font-weight="bold" fill="#111" letter-spacing="-0.75">15M</text>
<rect x="404.0" y="429.8" width="21.0" height="9" fill="#fff"/><text x="405.0" y="437" font-size="8.3" font-weight="normal" fill="#3f5ea9" letter-spacing="-0.60">14.2M</text>
<rect x="404.0" y="448.40000000000003" width="18.7" height="9" fill="#fff"/><text x="405.0" y="455.6" font-size="8.3" font-weight="normal" fill="#9a9a9a" letter-spacing="-0.60">01/25</text>
<rect x="595.5" y="408.1" width="21.0" height="9" fill="#fff"/><text x="596.5" y="415.3" font-size="8.3" font-weight="normal" fill="#9a9a9a" letter-spacing="-0.60">15.6M</text>
<rect x="595.5" y="417.8" width="22.2" height="9" fill="#fff"/><text x="596.5" y="425" font-size="8.3" font-weight="bold" fill="#111" letter-spacing="-0.60">14.9M</text>
<rect x="595.5" y="427.3" width="21.0" height="9" fill="#fff"/><text x="596.5" y="434.5" font-size="8.3" font-weight="normal" fill="#3f5ea9" letter-spacing="-0.60">14.2M</text>
<!-- row4 -->
<path d="M594 474 H755" stroke="#d9d9d9" stroke-width="1" stroke-dasharray="1 1"/>
<path d="M594 478.5 H755" stroke="#d9d9d9" stroke-width="1" stroke-dasharray="1 1"/>
<path d="M594 484.8 H755" stroke="#d9d9d9" stroke-width="1" stroke-dasharray="1 1"/>
<path d="M415.5 466.6 H592 V497 H415.5Z" fill="#fef5e1" stroke="#f8deaa" stroke-width="0.8"/>
<path d="M425 472.5 H592" fill="none" stroke="#2a2a2a" stroke-width="1.1" stroke-dasharray="1 1" shape-rendering="crispEdges"/>
<path d="M416 478.6 H592" fill="none" stroke="#222" stroke-width="1.25" stroke-linejoin="round"/>
<path d="M421 485.3 H592" stroke="#4a68b8" stroke-width="1.15"/>
<rect x="417" y="500.3" width="219" height="5.5" rx="2.75" fill="#d0d3d9"/>
<rect x="484.8" y="499.2" width="7.4" height="7.4" rx="1.3" fill="#3f5ea9"/><path d="M486.8 505.2 V500.8 H490.5 V503.5 H486.8Z" fill="#fff"/><path d="M570.5 505.2 V499.9 H574.7 V503.09999999999997 H570.5" fill="none" stroke="#3f5ea9" stroke-width="1"/><path d="M632.8 505.1 V499.8 H637.0 V503.0 H632.8" fill="none" stroke="#e39a3c" stroke-width="1"/>
<rect x="404.0" y="468.6" width="21.0" height="9" fill="#fff"/><text x="405.0" y="475.8" font-size="8.3" font-weight="normal" fill="#9a9a9a" letter-spacing="-0.60">15.4M</text>
<rect x="404.0" y="479.8" width="16.1" height="9" fill="#fff"/><text x="405.0" y="487" font-size="8.3" font-weight="bold" fill="#111" letter-spacing="-0.75">15M</text>
<rect x="404.0" y="490.6" width="21.0" height="9" fill="#fff"/><text x="405.0" y="497.8" font-size="8.3" font-weight="normal" fill="#3f5ea9" letter-spacing="-0.60">14.2M</text>
<rect x="595.5" y="468.6" width="21.0" height="9" fill="#fff"/><text x="596.5" y="475.8" font-size="8.3" font-weight="normal" fill="#9a9a9a" letter-spacing="-0.60">15.4M</text>
<rect x="595.5" y="478.1" width="22.2" height="9" fill="#fff"/><text x="596.5" y="485.3" font-size="8.3" font-weight="bold" fill="#111" letter-spacing="-0.60">14.8M</text>
<rect x="595.5" y="488.1" width="21.0" height="9" fill="#fff"/><text x="596.5" y="495.3" font-size="8.3" font-weight="normal" fill="#3f5ea9" letter-spacing="-0.60">14.2M</text>
<rect x="590.8" y="273" width="2" height="239" fill="#7ed348"/>
</svg>
<div class="tag" style="left:507px;top:321.5px;width:44.5px"></div>
<svg class="abs" style="left:510.9px;top:324.3px" width="7" height="7" viewBox="0 0 7 7"><path d="M0.4 7 V0.6 H5.8 V4.6 H1.5 V7Z" fill="#3f5ea9"/></svg>
<div class="t" style="left:520.5px;top:323.9px;font-size:8.6px;letter-spacing:-0.5px;color:#222">75% CD</div>
<div class="tag" style="left:669px;top:321.5px;width:93px"></div>
<div class="t" style="left:673.5px;top:323.8px;font-size:8.4px;letter-spacing:-0.58px;color:#222">110 days to</div>
<svg class="abs" style="left:712.8px;top:323.5px" width="7" height="8" viewBox="0 0 7 8"><path d="M1 7.5 V1 H5.4 V4.4 H1" fill="none" stroke="#e39a3c" stroke-width="1.1"/></svg>
<div class="t" style="left:721.7px;top:323.8px;font-size:8.4px;letter-spacing:-0.5px;color:#222">Final GMP</div>
<div class="tag" style="left:489.5px;top:384.2px;width:44.5px"></div>
<svg class="abs" style="left:493.4px;top:387.0px" width="7" height="7" viewBox="0 0 7 7"><path d="M0.4 7 V0.6 H5.8 V4.6 H1.5 V7Z" fill="#3f5ea9"/></svg>
<div class="t" style="left:503.0px;top:386.59999999999997px;font-size:8.6px;letter-spacing:-0.5px;color:#222">75% CD</div>
<div class="tag" style="left:600.2px;top:384.2px;width:84.5px"></div>
<div class="t" style="left:604.7px;top:386.5px;font-size:8.7px;letter-spacing:-0.4px;color:#222">8 days to</div>
<svg class="abs" style="left:639px;top:386.2px" width="7" height="8" viewBox="0 0 7 8"><path d="M1 7.5 V1 H5.4 V4.4 H1" fill="none" stroke="#e39a3c" stroke-width="1.1"/></svg>
<div class="t" style="left:648.5px;top:386.5px;font-size:8.4px;letter-spacing:-0.5px;color:#222">GMP Set</div>
<div class="tag" style="left:439.5px;top:446.3px;width:44.5px"></div>
<svg class="abs" style="left:443.4px;top:449.1px" width="7" height="7" viewBox="0 0 7 7"><path d="M0.4 7 V0.6 H5.8 V4.6 H1.5 V7Z" fill="#3f5ea9"/></svg>
<div class="t" style="left:453.0px;top:448.7px;font-size:8.6px;letter-spacing:-0.5px;color:#222">75% CD</div>
<div class="tag" style="left:654px;top:446.3px;width:73.3px"></div>
<div class="t" style="left:658.5px;top:448.6px;font-size:8.7px;letter-spacing:-0.4px;color:#222">62 days to</div>
<svg class="abs" style="left:697px;top:448.3px" width="7" height="8" viewBox="0 0 7 8"><path d="M1 7.5 V1 H5.4 V4.4 H1" fill="none" stroke="#e39a3c" stroke-width="1.1"/></svg>
<div class="t" style="left:706.5px;top:448.6px;font-size:8.4px;letter-spacing:-0.5px;color:#222">GMP</div>

</body>
</html>
